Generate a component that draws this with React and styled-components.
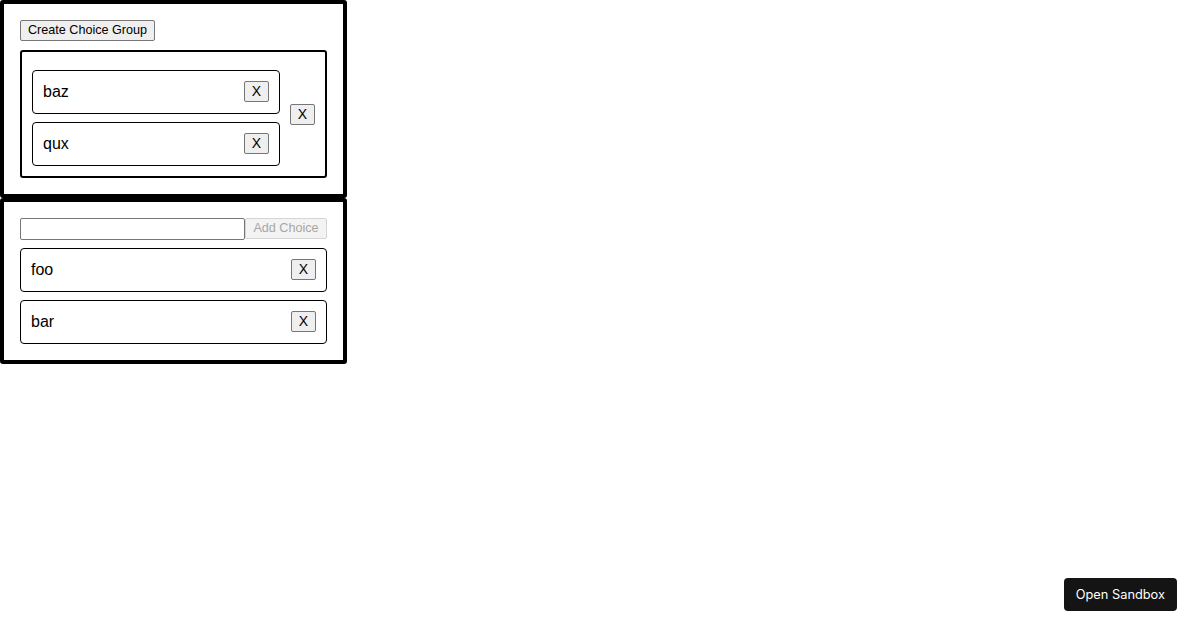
import React, { useState } from 'react';
import styled, { createGlobalStyle } from 'styled-components';

const GlobalStyle = createGlobalStyle`
  html, body {
    margin: 0;
    padding: 0;
    background: #fff;
    font-family: "Liberation Sans", Arial, sans-serif;
    color: #000;
  }
`;

const Panel = styled.div`
  box-sizing: border-box;
  width: 347px;
  border: 4px solid #000;
  border-radius: 3px;
  padding: 16px;
  display: flex;
  flex-direction: column;
  gap: ${(props) => (props.gap ? props.gap : 8)}px;
`;

const NativeButton = styled.button`
  font-family: "Liberation Sans", Arial, sans-serif;
  font-size: 12.6px;
  line-height: 15px;
  height: 21px;
  padding: 1px 7px;
  background: #efefef;
  color: #000;
  border: 1px solid #767676;
  border-radius: 2px;
  box-sizing: border-box;
  cursor: pointer;

  &:disabled {
    color: #a6a6a6;
    background: #f3f3f3;
    border-color: #d4d4d4;
    cursor: default;
  }
`;

const CreateButton = styled(NativeButton)`
  align-self: flex-start;
`;

const RemoveButton = styled(NativeButton)`
  width: 25px;
  font-size: 14px;
  padding: 0;
  flex-shrink: 0;
`;

const Group = styled.div`
  display: flex;
  align-items: center;
  gap: 10px;
  margin-top: 1px;
  border: 2px solid #000;
  border-radius: 3px;
  padding: 10px;
`;

const ItemList = styled.div`
  flex: 1;
  display: flex;
  flex-direction: column;
  gap: 8px;
  padding-top: 8px;
`;

const Item = styled.div`
  box-sizing: border-box;
  height: 44px;
  display: flex;
  align-items: center;
  justify-content: space-between;
  padding: 0 10px 1px 10px;
  border: 1px solid #000;
  border-radius: 4px;
  font-size: 16px;
`;

const AddRow = styled.div`
  display: flex;
  height: 22px;
`;

const TextInput = styled.input`
  box-sizing: border-box;
  width: 225px;
  height: 22px;
  border: 1px solid #767676;
  border-radius: 2px;
  font-family: "Liberation Sans", Arial, sans-serif;
  font-size: 13.33px;
  padding: 1px 2px;
`;

const AddButton = styled(NativeButton)`
  flex: 1;
  height: 21px;
  padding: 0 4px;
`;

const SandboxButton = styled.button`
  position: fixed;
  right: 23px;
  bottom: 19px;
  height: 33px;
  padding: 0 12px;
  background: #141414;
  color: #fff;
  border: none;
  border-radius: 4px;
  font-family: Inter, "Liberation Sans", sans-serif;
  font-size: 12.8px;
  cursor: pointer;
`;

export default function App() {
  const [groupItems] = useState(['baz', 'qux']);
  const [choices] = useState(['foo', 'bar']);
  const [text, setText] = useState('');

  return (
    <>
      <GlobalStyle />
      <Panel gap={8}>
        <CreateButton>Create Choice Group</CreateButton>
        <Group>
          <ItemList>
            {groupItems.map((name) => (
              <Item key={name}>
                {name}
                <RemoveButton>X</RemoveButton>
              </Item>
            ))}
          </ItemList>
          <RemoveButton>X</RemoveButton>
        </Group>
      </Panel>
      <Panel gap={8}>
        <AddRow>
          <TextInput value={text} onChange={(e) => setText(e.target.value)} />
          <AddButton disabled={!text}>Add Choice</AddButton>
        </AddRow>
        {choices.map((name) => (
          <Item key={name}>
            {name}
            <RemoveButton>X</RemoveButton>
          </Item>
        ))}
      </Panel>
      <SandboxButton>Open Sandbox</SandboxButton>
    </>
  );
}
